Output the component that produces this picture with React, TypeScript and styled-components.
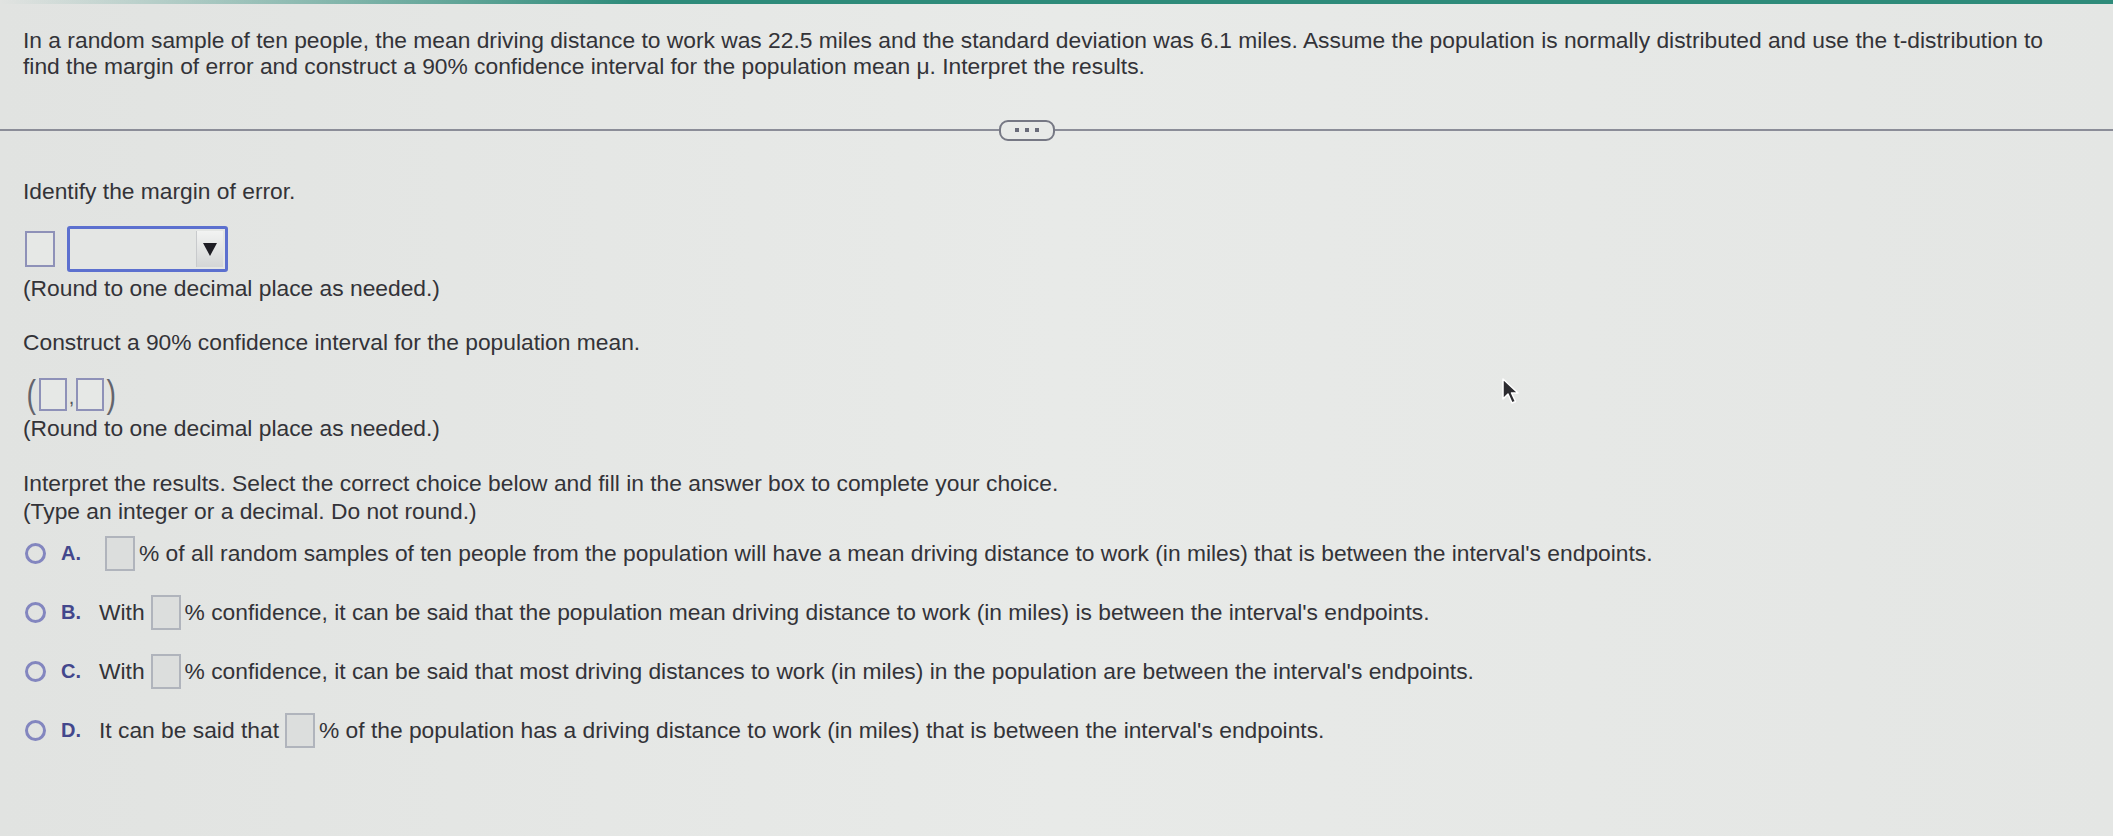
import styled, { createGlobalStyle } from "styled-components"

const GlobalStyle = createGlobalStyle`
  html, body {
    margin: 0;
    padding: 0;
    background: #e5e7e5;
  }
  body {
    font-family: "Liberation Sans", Arial, sans-serif;
    color: #333338;
  }
`

const Page = styled.div`
  width: 2113px;
  height: 836px;
  overflow: hidden;
  position: relative;
  background: linear-gradient(90deg, #e1e3e1 0%, #e8eae8 50%, #e4e6e4 100%);
`

const TopBar = styled.div`
  height: 4px;
  background: linear-gradient(90deg, rgba(46, 139, 122, 0) 0%, #2e8b7a 30%, #2e8b7a 100%);
`

const Content = styled.div`
  padding: 0 23px;
  font-size: 22.8px;
  line-height: 26px;
`

const Question = styled.p`
  margin: 23px 0 0;
  width: 2045px;
`

const DividerRow = styled.div`
  display: flex;
  align-items: center;
  height: 18px;
  margin-top: 42px;
`

const Rule = styled.div<{ $w?: number }>`
  height: 2px;
  background: #8b8d98;
  ${(p) => (p.$w ? `width: ${p.$w}px;` : "flex: 1;")}
`

const MoreButton = styled.div`
  width: 52px;
  height: 17px;
  border: 2px solid #767884;
  border-radius: 9px;
  display: flex;
  align-items: center;
  justify-content: center;
  gap: 6px;
  background: #e8eae8;
`

const Dot = styled.span`
  width: 4px;
  height: 4px;
  background: #6a6c7a;
`

const Prompt = styled.div<{ $top: number; $lh?: number }>`
  margin-top: ${(p) => p.$top}px;
  line-height: ${(p) => p.$lh ?? 26}px;
`

const InputRow = styled.div<{ $top: number; $h: number }>`
  display: flex;
  align-items: center;
  gap: 12px;
  height: ${(p) => p.$h}px;
  margin-top: ${(p) => p.$top}px;
  padding-left: 2px;
`

const EmptyBox = styled.div<{ $w: number; $h: number }>`
  width: ${(p) => p.$w}px;
  height: ${(p) => p.$h}px;
  box-sizing: border-box;
  border: 2px solid #8e91b8;
  background: #e6e8e6;
`

const Select = styled.div`
  width: 161px;
  height: 46px;
  box-sizing: border-box;
  border: 3px solid #5c70cf;
  border-radius: 3px;
  display: flex;
  justify-content: flex-end;
  align-items: center;
  padding-right: 2px;
  background: #e4e6e4;
`

const SelectArrow = styled.div`
  width: 26px;
  height: 36px;
  background: linear-gradient(180deg, #f2f3f2 0%, #d4d6d6 100%);
  border-left: 1px solid #c8cacc;
  display: flex;
  align-items: center;
  justify-content: center;
`

const Interval = styled.div`
  display: flex;
  align-items: center;
  gap: 1px;
`

const Paren = styled.span`
  font-size: 38px;
  line-height: 40px;
  color: #64646c;
  transform: scaleX(0.75);
`

const Comma = styled.span`
  font-size: 20px;
  align-self: flex-end;
  margin: 0 1px 4px;
  color: #55555c;
`

const Choices = styled.div`
  margin-top: 10px;
  display: flex;
  flex-direction: column;
  gap: 23px;
`

const Choice = styled.div`
  display: flex;
  align-items: center;
  height: 36px;
  padding-left: 2px;
`

const Radio = styled.span`
  width: 21px;
  height: 21px;
  box-sizing: border-box;
  border: 3px solid #8386bf;
  border-radius: 50%;
  flex-shrink: 0;
`

const Letter = styled.span`
  width: 38px;
  margin-left: 15px;
  font-weight: 700;
  font-size: 20px;
  color: #43478c;
`

const Blank = styled.span`
  display: inline-block;
  width: 30px;
  height: 35px;
  box-sizing: border-box;
  border: 2px solid #b0b4bc;
  background: #dcdedd;
  margin: 0 4px 0 6px;
`

const ChoiceText = styled.span`
  display: flex;
  align-items: center;
  white-space: pre;
`

const Cursor = styled.svg`
  position: absolute;
  left: 1500px;
  top: 377px;
`

const choices = [
  { key: "A.", before: "", after: "% of all random samples of ten people from the population will have a mean driving distance to work (in miles) that is between the interval's endpoints." },
  { key: "B.", before: "With", after: "% confidence, it can be said that the population mean driving distance to work (in miles) is between the interval's endpoints." },
  { key: "C.", before: "With", after: "% confidence, it can be said that most driving distances to work (in miles) in the population are between the interval's endpoints." },
  { key: "D.", before: "It can be said that", after: "% of the population has a driving distance to work (in miles) that is between the interval's endpoints." },
]

export default function App() {
  return (
    <Page>
      <GlobalStyle />
      <TopBar />
      <Content>
        <Question>
          In a random sample of ten people, the mean driving distance to work was 22.5 miles and the standard deviation was 6.1 miles. Assume the population is normally distributed and use the t-distribution to find the margin of error and construct a 90% confidence interval for the population mean μ. Interpret the results.
        </Question>
      </Content>
      <DividerRow>
        <Rule $w={999} />
        <MoreButton>
          <Dot />
          <Dot />
          <Dot />
        </MoreButton>
        <Rule />
      </DividerRow>
      <Content>
        <Prompt $top={39}>Identify the margin of error.</Prompt>
        <InputRow $top={22} $h={46}>
          <EmptyBox $w={30} $h={36} />
          <Select>
            <SelectArrow>
              <svg width="16" height="16" viewBox="0 0 16 16">
                <polygon points="1,2 15,2 8,15" fill="#1e1e24" />
              </svg>
            </SelectArrow>
          </Select>
        </InputRow>
        <Prompt $top={3}>(Round to one decimal place as needed.)</Prompt>
        <Prompt $top={28}>Construct a 90% confidence interval for the population mean.</Prompt>
        <InputRow $top={21} $h={36}>
          <Interval>
            <Paren>(</Paren>
            <EmptyBox $w={28} $h={33} />
            <Comma>,</Comma>
            <EmptyBox $w={28} $h={33} />
            <Paren>)</Paren>
          </Interval>
        </InputRow>
        <Prompt $top={3}>(Round to one decimal place as needed.)</Prompt>
        <Prompt $top={28} $lh={28}>
          Interpret the results. Select the correct choice below and fill in the answer box to complete your choice.
          <br />
          (Type an integer or a decimal. Do not round.)
        </Prompt>
        <Choices>
          {choices.map((c) => (
            <Choice key={c.key}>
              <Radio />
              <Letter>{c.key}</Letter>
              <ChoiceText>
                {c.before}
                <Blank />
                {c.after}
              </ChoiceText>
            </Choice>
          ))}
        </Choices>
      </Content>
      <Cursor width="24" height="30" viewBox="0 0 24 30">
        <path d="M3 2 L3 22 L8 17 L12 26 L15.5 24.5 L11.5 16 L18 16 Z" fill="#2c2c30" stroke="#ffffff" strokeWidth="1.5" strokeLinejoin="round" />
      </Cursor>
    </Page>
  )
}
